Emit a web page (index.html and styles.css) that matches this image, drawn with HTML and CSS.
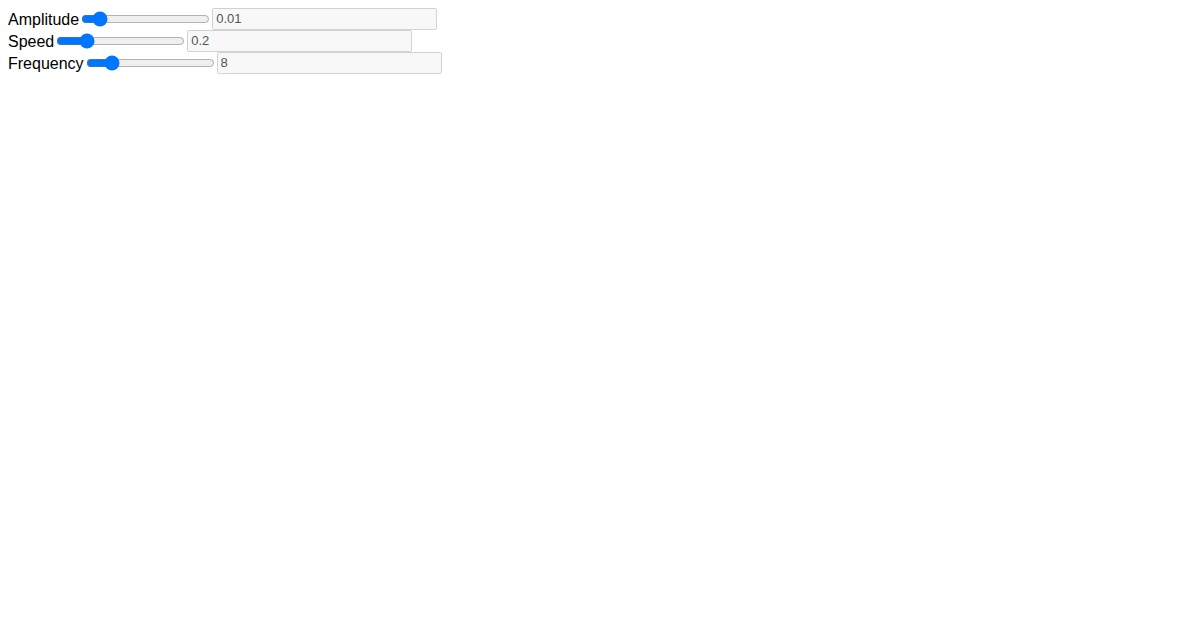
FILE: index.html
```html
<!DOCTYPE html>
<html lang="en">
<head>
<meta charset="utf-8">
<title>Wave controls</title>
<link rel="stylesheet" href="styles.css">
</head>
<body>
<div class="control">
  <label class="name" for="amplitude">Amplitude</label>
  <input class="slider" type="range" id="amplitude" min="0" max="0.1" step="0.001" value="0.01">
  <input class="value" type="text" aria-label="Amplitude value" value="0.01" disabled>
</div>
<div class="control">
  <label class="name" for="speed">Speed</label>
  <input class="slider" type="range" id="speed" min="0" max="1" step="0.01" value="0.2">
  <input class="value" type="text" aria-label="Speed value" value="0.2" disabled>
</div>
<div class="control">
  <label class="name" for="frequency">Frequency</label>
  <input class="slider" type="range" id="frequency" min="0" max="50" step="1" value="8">
  <input class="value" type="text" aria-label="Frequency value" value="8" disabled>
</div>
</body>
</html>
```
FILE: styles.css
```css
body {
  margin: 8px;
  background: #fff;
  color: #000;
  font-family: Helvetica, "Liberation Sans", Arial, sans-serif;
  font-size: 16px;
}

.control {
  display: flex;
  align-items: center;
  gap: 2px;
}

.name {
  padding-top: 2px;
}

.slider {
  width: 129px;
  height: 16px;
  margin: 0;
}

.value {
  box-sizing: border-box;
  width: 225px;
  height: 22px;
  padding: 0 2px 2px;
  font-family: Helvetica, "Liberation Sans", Arial, sans-serif;
  font-size: 13px;
}
```
